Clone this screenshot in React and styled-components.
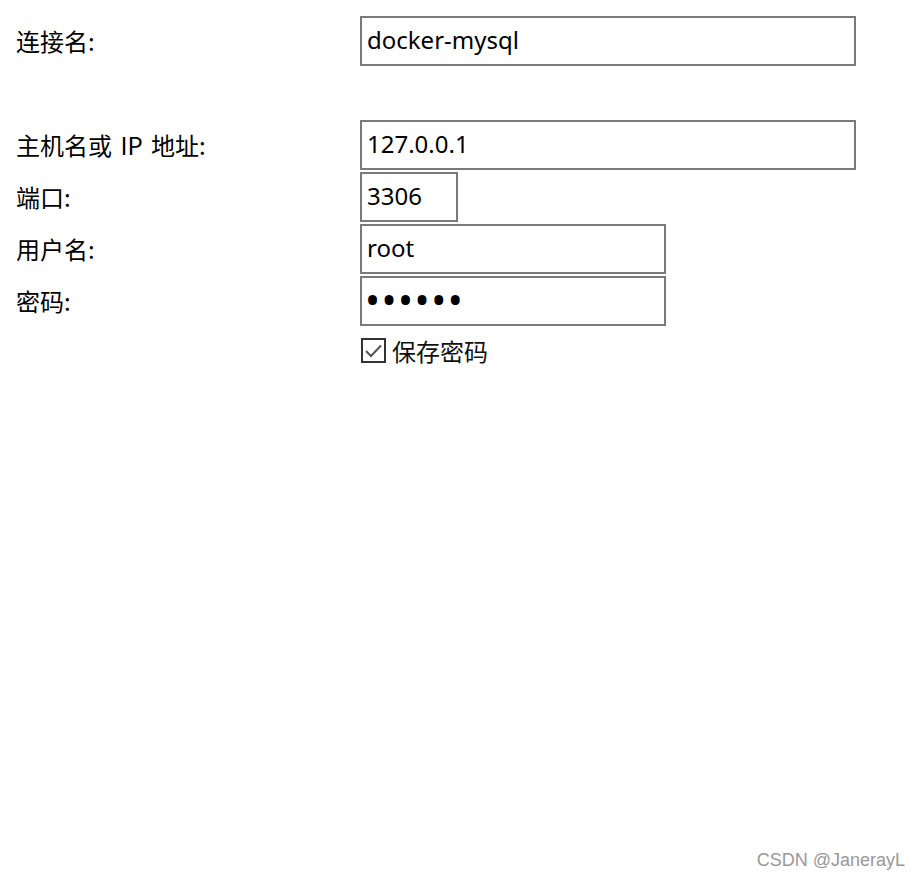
import React from "react";
import styled, { createGlobalStyle } from "styled-components";

const GlobalStyle = createGlobalStyle`
  html, body {
    margin: 0;
    padding: 0;
    background: #fff;
  }
  body {
    font-family: "Noto Sans", "Noto Sans CJK SC", sans-serif;
    color: #000;
  }
`;

function App() {
  return (
    <>
      <GlobalStyle />
      <Pagina>
        <Formulario>
          <Etiqueta>连接名:</Etiqueta>
          <Campo type="text" defaultValue="docker-mysql" ancho="496px" />

          <Separador />

          <Etiqueta>主机名或 IP 地址:</Etiqueta>
          <Campo type="text" defaultValue="127.0.0.1" ancho="496px" />

          <Etiqueta>端口:</Etiqueta>
          <Campo type="text" defaultValue="3306" ancho="98px" />

          <Etiqueta>用户名:</Etiqueta>
          <Campo type="text" defaultValue="root" ancho="306px" />

          <Etiqueta>密码:</Etiqueta>
          <Campo type="password" defaultValue="123456" ancho="306px" />

          <span />
          <Opcion>
            <Casilla>
              <svg width="21" height="21" viewBox="0 0 21 21">
                <path d="M3 11 L8 16 L18 5.5" fill="none" stroke="#555" strokeWidth="2" />
              </svg>
            </Casilla>
            <TextoOpcion>保存密码</TextoOpcion>
          </Opcion>
        </Formulario>
        <MarcaAgua>CSDN @JanerayL</MarcaAgua>
      </Pagina>
    </>
  );
}

const Pagina = styled.div`
  position: relative;
  width: 920px;
  height: 882px;
  box-sizing: border-box;
  padding: 16px 0 0 16px;
`;

const Formulario = styled.div`
  display: grid;
  grid-template-columns: 344px 1fr;
  row-gap: 2px;
  align-items: center;
`;

const Etiqueta = styled.label`
  font-family: "Noto Sans CJK SC", sans-serif;
  font-size: 24px;
  line-height: 1;
  word-spacing: 3px;
`;

const Separador = styled.div`
  grid-column: 1 / 3;
  height: 50px;
`;

const Campo = styled.input`
  box-sizing: border-box;
  width: ${(p) => p.ancho};
  height: 50px;
  margin: 0;
  padding: 0 0 4px 5px;
  border: 2px solid #7a7a7a;
  border-radius: 0;
  outline: none;
  background: #fff;
  font-family: "Noto Sans", sans-serif;
  font-size: 24px;
  color: #000;
  &[type="password"] {
    font-size: 40px;
    letter-spacing: 1.5px;
    padding: 0 0 4px 3px;
  }
`;

const Opcion = styled.div`
  display: flex;
  align-items: center;
  gap: 6px;
  margin-top: 10px;
`;

const Casilla = styled.span`
  display: flex;
  align-items: center;
  justify-content: center;
  box-sizing: border-box;
  width: 25px;
  height: 25px;
  border: 2px solid #333;
  margin-left: 1px;
`;

const TextoOpcion = styled.span`
  font-family: "Noto Sans CJK SC", sans-serif;
  font-size: 24px;
  line-height: 1;
  color: #111;
`;

const MarcaAgua = styled.div`
  position: absolute;
  right: 15px;
  bottom: 11px;
  font-family: "Liberation Sans", Arial, sans-serif;
  font-size: 18px;
  color: #999;
`;

export default App;
